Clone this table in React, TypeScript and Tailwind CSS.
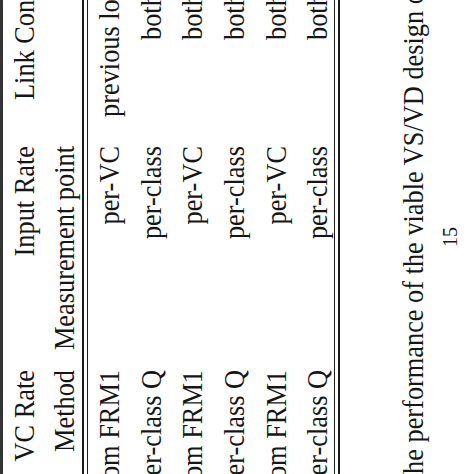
import React from "react";

const rows = [
  { c1: "from FRM1", c2: "per-VC", c3: "previous location", c3pad: "pl-[32px]" },
  { c1: "per-class Q", c2: "per-class", c3: "both", c3pad: "pl-[116.8px]" },
  { c1: "from FRM1", c2: "per-VC", c3: "both", c3pad: "pl-[116.8px]" },
  { c1: "per-class Q", c2: "per-class", c3: "both", c3pad: "pl-[116.8px]" },
  { c1: "from FRM1", c2: "per-VC", c3: "both", c3pad: "pl-[116.8px]" },
  { c1: "per-class Q", c2: "per-class", c3: "both", c3pad: "pl-[116.8px]" },
];

function Row({
  c1,
  c2,
  c3,
  c3pad,
  h,
}: {
  c1: string;
  c2: string;
  c3: string;
  c3pad: string;
  h: string;
}) {
  return (
    <div className={`flex whitespace-nowrap ${h}`}>
      <div className="w-[114.5px] shrink-0 flex justify-end">
        <span>{c1}</span>
      </div>
      <div className="w-[246.7px] shrink-0 flex justify-end">
        <span>{c2}</span>
      </div>
      <div className={`flex-1 ${c3pad}`}>
        <span>{c3}</span>
      </div>
    </div>
  );
}

export default function App() {
  return (
    <div className="w-[474px] h-[474px] overflow-hidden bg-white flex items-center justify-center">
      <div className="shrink-0 w-[522px] h-[474px] flex flex-col [transform:rotate(-90deg)_scaleX(0.908)] font-['Liberation_Serif',serif] text-[29px] text-[#161616]">
        <div className="h-[3px] shrink-0 bg-[#333333]" />
        <div className="mt-[0.5px] h-[40px] leading-[40px] shrink-0 flex whitespace-nowrap">
          <div className="w-[114.5px] shrink-0 flex justify-end">
            <span>VC Rate</span>
          </div>
          <div className="w-[246.7px] shrink-0 flex justify-end">
            <span>Input Rate</span>
          </div>
          <div className="flex-1 pl-[50.7px]">
            <span>Link Constraint</span>
          </div>
        </div>
        <div className="mt-[2px] h-[36px] leading-[36px] shrink-0 flex whitespace-nowrap">
          <div className="w-[114.5px] shrink-0 flex justify-end">
            <span>Method</span>
          </div>
          <div className="w-[246.7px] shrink-0 flex justify-end">
            <span>Measurement point</span>
          </div>
          <div className="flex-1" />
        </div>
        <div className="mt-[0.5px] h-[1.5px] shrink-0 bg-[#1c1c1c]" />
        <div className="mt-[3px] h-[1.5px] shrink-0 bg-[#1c1c1c]" />
        <div className="mt-[5.2px] flex flex-col gap-[9.6px] shrink-0">
          {rows.map((r, i) => (
            <Row key={i} {...r} h="h-[32px] leading-[32px]" />
          ))}
        </div>
        <div className="mt-[0.8px] h-[1.5px] shrink-0 bg-[#1c1c1c]" />
        <div className="mt-[3px] h-[1.5px] shrink-0 bg-[#1c1c1c]" />
        <div className="mt-[56.7px] h-[32px] leading-[32px] shrink-0 whitespace-nowrap">
          <span className="ml-[-8px]">the performance of the viable VS/VD design options</span>
        </div>
        <div className="mt-[9.2px] h-[24px] leading-[24px] shrink-0 text-[22px] text-center">
          15
        </div>
      </div>
    </div>
  );
}
